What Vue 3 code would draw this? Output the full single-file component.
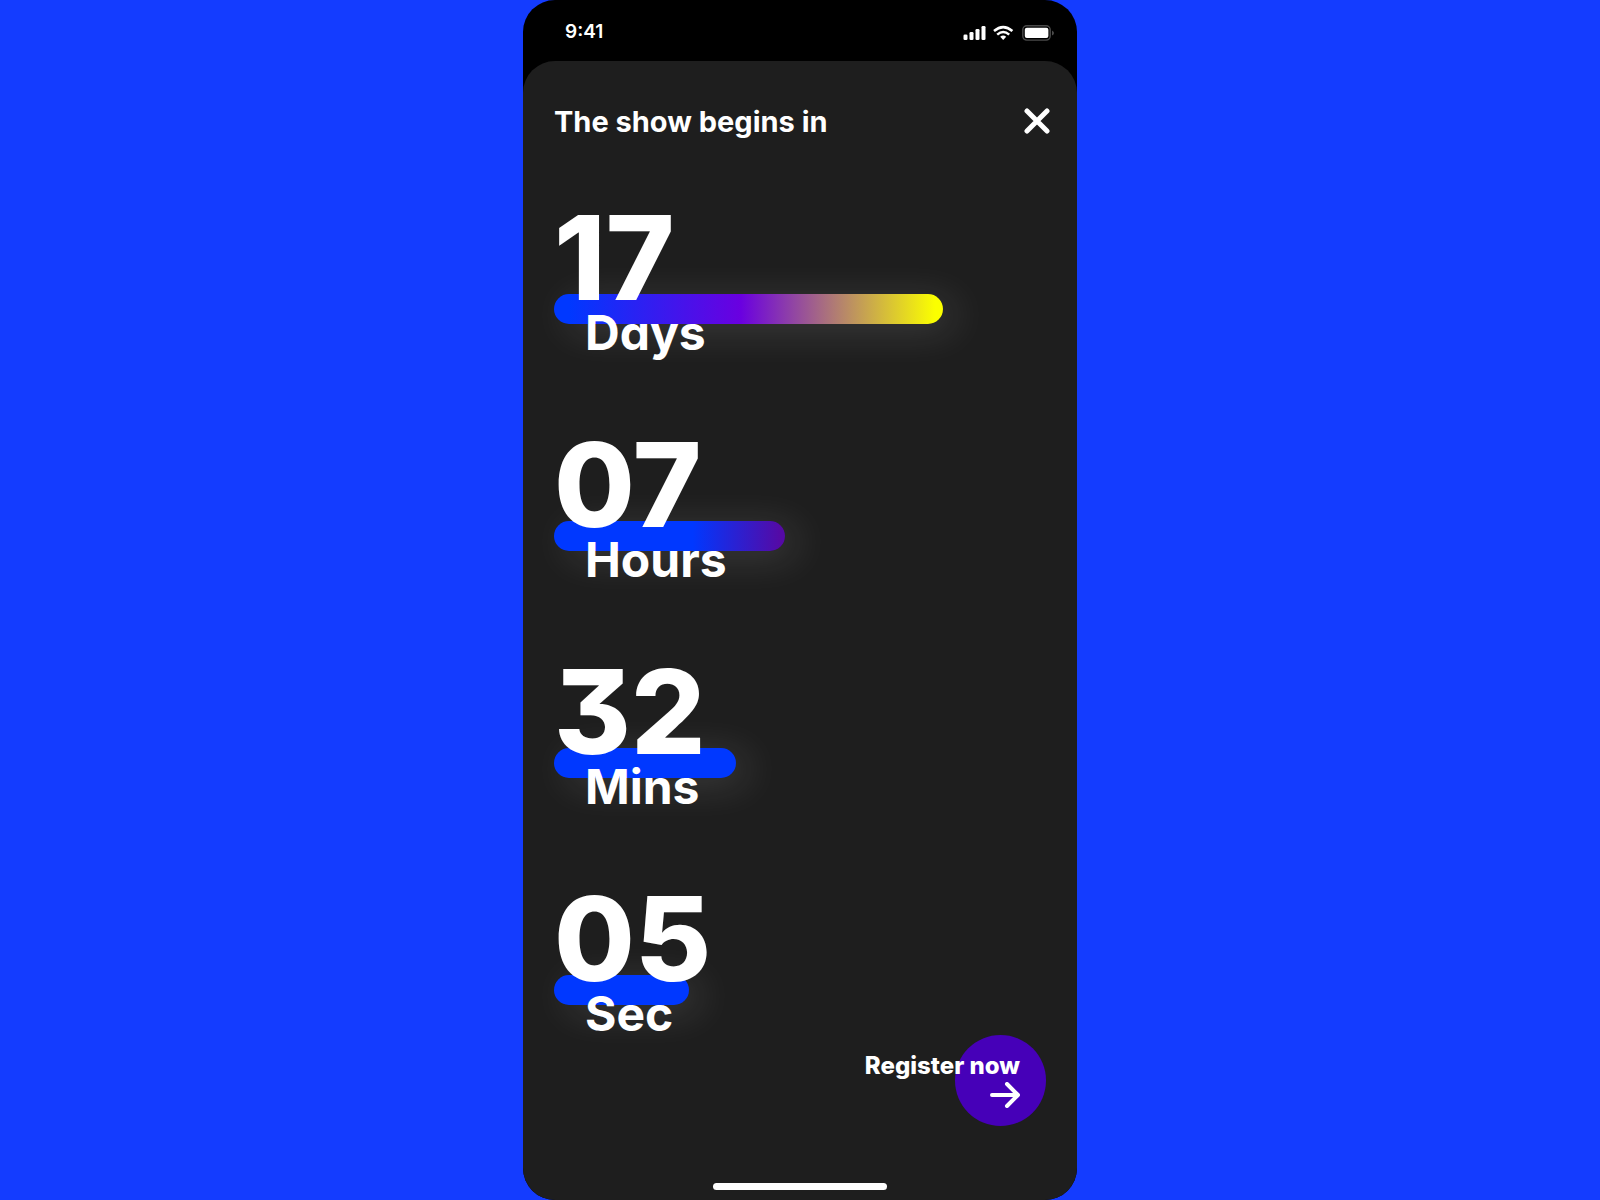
<script setup>
import { ref } from 'vue'

const emit = defineEmits(['close', 'register'])

// progress is the length of the bar in percent of the row
const units = ref([
  { name: 'days', value: '17', label: 'Days', progress: 79 },
  { name: 'hours', value: '07', label: 'Hours', progress: 47 },
  { name: 'mins', value: '32', label: 'Mins', progress: 37 },
  { name: 'sec', value: '05', label: 'Sec', progress: 27.5 }
])
</script>

<template>
  <main class="phone">
    <div class="status-bar">
      <span class="time">9:41</span>
      <svg class="status-icons" viewBox="0 0 92 16" aria-hidden="true">
        <g fill="#fff">
          <rect x="1.5" y="9.5" width="4" height="5.5" rx="1.3" />
          <rect x="7.5" y="7" width="4" height="8" rx="1.3" />
          <rect x="13.5" y="4" width="4" height="11" rx="1.3" />
          <rect x="19.5" y="1" width="4" height="14" rx="1.3" />
          <path d="M38.2 11.8 Q41.2 9.2 44.2 11.8 L41.2 15 Z" />
        </g>
        <g fill="none" stroke="#fff" stroke-width="2.5">
          <path d="M32 6 Q41.2 -1.8 50.4 6" />
          <path d="M35.2 9.6 Q41.2 4.4 47.2 9.6" />
        </g>
        <rect x="60.8" y="0.7" width="27.4" height="14.4" rx="4" fill="none" stroke="#4a4a4a" stroke-width="1.4" />
        <rect x="62.8" y="2.8" width="23.6" height="10.2" rx="2" fill="#fff" />
        <path d="M90 5.5 Q92 6.5 92 8 Q92 9.5 90 10.5 Z" fill="#4a4a4a" />
      </svg>
    </div>

    <section class="sheet">
      <header class="header">
        <h1 class="title">The show begins in</h1>
        <button class="close" type="button" aria-label="Close" @click="emit('close')">
          <svg viewBox="0 0 26 26" aria-hidden="true">
            <path d="M3 3 L23 23 M23 3 L3 23" />
          </svg>
        </button>
      </header>

      <ul class="countdown">
        <li v-for="unit in units" :key="unit.name" class="unit">
          <span class="number">{{ unit.value }}</span>
          <div class="bar" :class="unit.name" :style="{ width: unit.progress + '%' }"></div>
          <span class="label">{{ unit.label }}</span>
        </li>
      </ul>

      <button class="register" type="button" @click="emit('register')">
        <span>Register now</span>
        <svg viewBox="0 0 30 26" aria-hidden="true">
          <path d="M2 13 H28 M17 2 L28 13 L17 24" />
        </svg>
      </button>

      <div class="home-indicator"></div>
    </section>
  </main>
</template>

<style>
body {
  background: #143cff;
}
</style>

<style scoped>
.phone {
  display: flex;
  flex-direction: column;
  box-sizing: border-box;
  width: 100%;
  max-width: 554px;
  min-height: 100vh;
  margin: 0 auto;
  border-radius: 32px;
  overflow: hidden;
  background: #000;
  color: #fff;
  font-family: Inter, 'Liberation Sans', sans-serif;
  /* single-storey a, flat-topped 3 */
  font-feature-settings: 'cv11', 'cv09';
}

.status-bar {
  display: flex;
  justify-content: space-between;
  align-items: center;
  height: 61px;
  padding: 0 23px 0 42px;
}

.time {
  padding-top: 2px;
  font-size: 19px;
  font-weight: 600;
}

.status-icons {
  width: 92px;
  height: 16px;
  margin-top: 4px;
}

.sheet {
  display: flex;
  flex-direction: column;
  flex: 1;
  padding: 44px 31px 10px;
  border-radius: 32px 32px 0 0;
  background: #1e1e1e;
}

.header {
  display: flex;
  justify-content: space-between;
  align-items: flex-start;
}

.title {
  margin: 0;
  font-size: 29px;
  font-weight: 700;
  line-height: 34px;
}

button {
  border: 0;
  background: none;
  color: inherit;
  font: inherit;
  font-feature-settings: inherit;
  cursor: pointer;
}

.close {
  width: 32px;
  height: 32px;
  padding: 3px;
  margin-right: -7px;
}

.close svg {
  display: block;
  fill: none;
  stroke: #fff;
  stroke-width: 5;
  stroke-linecap: round;
}

.countdown {
  display: flex;
  flex-direction: column;
  gap: 89px;
  margin: 74px 0 0;
  padding: 0;
  list-style: none;
}

.unit {
  display: flex;
  flex-direction: column;
  align-items: flex-start;
  isolation: isolate;
}

.number {
  font-size: 117px;
  font-weight: 800;
  line-height: 90px;
}

.bar {
  z-index: -1;
  height: 30px;
  margin: -9px 0;
  border-radius: 15px;
  background: #0038ff;
  box-shadow: 12px 6px 40px rgba(255, 255, 255, 0.15);
}

.bar.days {
  background: linear-gradient(90deg, #0038ff 4%, #6a00e0 48%, #fbff00 98%);
}

.bar.hours {
  background: linear-gradient(90deg, #0038ff 60%, #550aa5 98%);
}

.label {
  padding-left: 31px;
  font-size: 48px;
  font-weight: 700;
  line-height: 36px;
}

.register {
  position: relative;
  isolation: isolate;
  display: flex;
  flex-direction: column;
  align-items: flex-end;
  align-self: flex-end;
  gap: 7px;
  height: 91px;
  margin-top: 3px;
  padding: 22px 26px 0 0;
  font-size: 24px;
  font-weight: 800;
  line-height: 18px;
}

/* the round backdrop sits behind the end of the text */
.register::before {
  content: '';
  position: absolute;
  z-index: -1;
  top: 0;
  right: 0;
  width: 91px;
  height: 91px;
  border-radius: 50%;
  background: #4600b8;
}

.register svg {
  width: 30px;
  height: 26px;
  fill: none;
  stroke: #fff;
  stroke-width: 4;
  stroke-linecap: round;
  stroke-linejoin: round;
}

.home-indicator {
  width: 174px;
  height: 7px;
  margin: auto auto 0;
  border-radius: 4px;
  background: #fff;
}
</style>
